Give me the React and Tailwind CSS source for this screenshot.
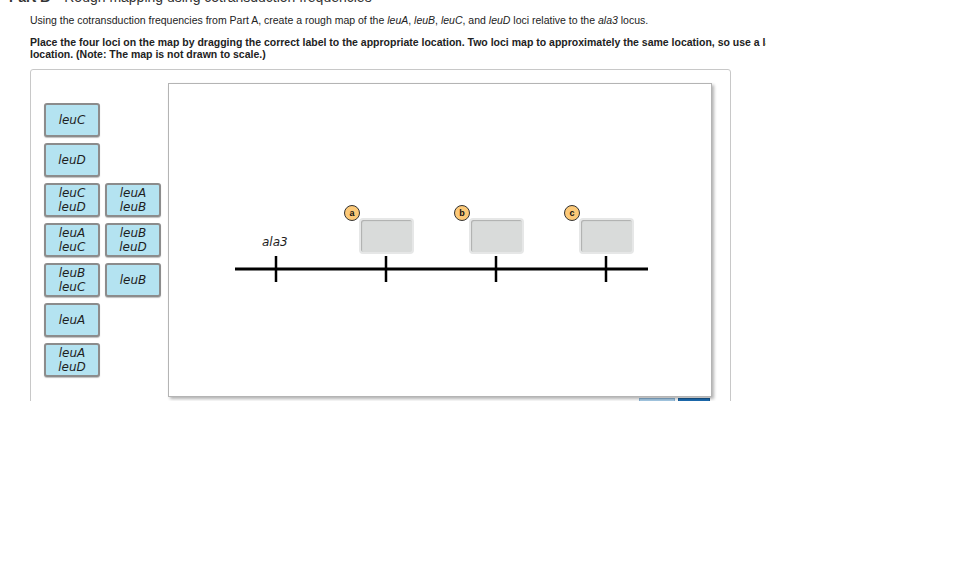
import React from "react";

const labels = [
  [["leuC"]],
  [["leuD"]],
  [["leuC", "leuD"], ["leuA", "leuB"]],
  [["leuA", "leuC"], ["leuB", "leuD"]],
  [["leuB", "leuC"], ["leuB"]],
  [["leuA"]],
  [["leuA", "leuD"]],
];

const targets = [
  { id: "a", left: 190 },
  { id: "b", left: 300 },
  { id: "c", left: 410 },
];

function Tile({ lines }) {
  return (
    <div className="w-[56px] h-[34px] flex flex-col items-center justify-center rounded-[3px] border-2 border-[#8c8c8c] bg-[#b4e3f1] text-[12px] leading-[14px] italic text-[#1e1e1e] shadow-[0_1px_1px_rgba(0,0,0,0.25)] font-['DejaVu_Sans',sans-serif]">
      {lines.map((l) => (
        <span key={l}>{l}</span>
      ))}
    </div>
  );
}

function GeneMap() {
  return (
    <div className="relative w-[544px] h-[314px] border border-[#b4b4b4] bg-white shadow-[2px_2px_3px_rgba(0,0,0,0.3)]">
      <svg className="absolute left-0 top-0" width="544" height="314">
        <line x1="66" y1="185" x2="479" y2="185" stroke="#000" strokeWidth="3" />
        {[107, 217, 327, 437].map((x) => (
          <line key={x} x1={x} y1="172" x2={x} y2="198" stroke="#000" strokeWidth="2.5" />
        ))}
      </svg>
      <span className="absolute left-[93px] top-[149px] text-[12px] italic text-[#1e1e1e] font-['DejaVu_Sans',sans-serif]">
        ala3
      </span>
      {targets.map((t) => (
        <React.Fragment key={t.id}>
          <div
            className="absolute top-[134px] w-[55px] h-[36px] rounded-[4px] bg-[#d9dbda] border-2 border-[#e6e7e7] shadow-[inset_1px_1px_1px_rgba(0,0,0,0.2)]"
            style={{ left: t.left }}
          />
          <div
            className="absolute top-[121px] w-[16px] h-[16px] rounded-full bg-[#fcc978] border border-[#333] flex items-center justify-center text-[9px] font-bold leading-none text-[#111] font-['Liberation_Sans',sans-serif]"
            style={{ left: t.left - 15 }}
          >
            {t.id}
          </div>
        </React.Fragment>
      ))}
    </div>
  );
}

export default function App() {
  return (
    <div className="w-[980px] h-[588px] bg-white font-['Liberation_Sans',Arial,sans-serif] text-[#222]">
      <div className="h-[401px] overflow-hidden">
        <div className="mt-[-11px] ml-[9px] text-[14px] leading-[16px] text-[#333]">
          <b>Part B</b>
          <span className="ml-[14px]">Rough mapping using cotransduction frequencies</span>
        </div>
        <p className="mt-[9px] ml-[30px] text-[10.5px] leading-[13px]">
          Using the cotransduction frequencies from Part A, create a rough map of the <i>leuA</i>, <i>leuB</i>,{" "}
          <i>leuC</i>, and <i>leuD</i> loci relative to the <i>ala3</i> locus.
        </p>
        <div className="mt-[9px] ml-[30px] w-[736px] overflow-hidden whitespace-nowrap text-[10.5px] leading-[12px] font-bold">
          <div>
            Place the four loci on the map by dragging the correct label to the appropriate location. Two loci map to
            approximately the same location, so use a label that includes both loci for that
          </div>
          <div>location. (Note: The map is not drawn to scale.)</div>
        </div>
        <div className="mt-[9px] ml-[30px] w-[701px] h-[400px] rounded-[3px] border border-[#c8c8c8] flex pt-[13px] pl-[13px]">
          <div className="mt-[20px] flex flex-col gap-[6px]">
            {labels.map((row, i) => (
              <div key={i} className="flex gap-[5px]">
                {row.map((lines) => (
                  <Tile key={lines.join()} lines={lines} />
                ))}
              </div>
            ))}
          </div>
          <div className="ml-[7px] flex flex-col items-end">
            <GeneMap />
            <div className="mt-[1px] mr-[2px] flex gap-[3px]">
              <div className="w-[36px] h-[20px] bg-[#a8cde8] border border-[#8ab4d6]" />
              <div className="w-[32px] h-[20px] bg-[#1d6db3] border border-[#155a96]" />
            </div>
          </div>
        </div>
      </div>
    </div>
  );
}
